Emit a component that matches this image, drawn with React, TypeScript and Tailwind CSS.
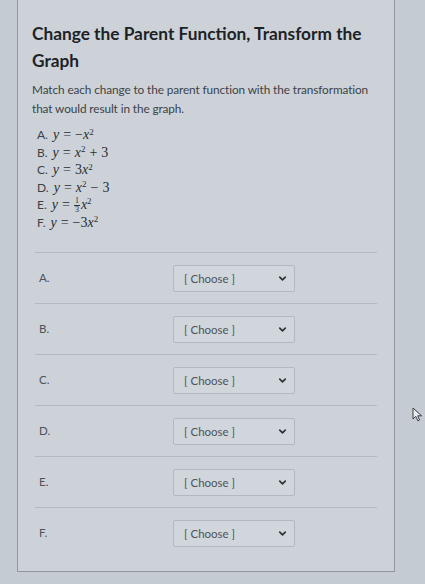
import { ChevronDown } from "lucide-react";

const Eq = () => <span className="mx-[4px]">=</span>;
const Sq = () => <sup className="text-[9px]">2</sup>;

const equations = [
  { letter: "A.", body: <><i>y</i><Eq />−<i>x</i><Sq /></> },
  { letter: "B.", body: <><i>y</i><Eq /><i>x</i><Sq /><span className="mx-[4px]">+</span>3</> },
  { letter: "C.", body: <><i>y</i><Eq />3<i>x</i><Sq /></> },
  { letter: "D.", body: <><i>y</i><Eq /><i>x</i><Sq /><span className="mx-[4px]">−</span>3</> },
  {
    letter: "E.",
    body: (
      <>
        <i>y</i>
        <Eq />
        <span className="inline-flex flex-col items-center align-middle text-[8px] leading-[8px] mr-[1px]">
          <span className="border-b border-[#333] px-[1px]">1</span>
          <span>3</span>
        </span>
        <i>x</i><Sq />
      </>
    ),
  },
  { letter: "F.", body: <><i>y</i><Eq />−3<i>x</i><Sq /></> },
];

const rows = ["A.", "B.", "C.", "D.", "E.", "F."];

function Select() {
  return (
    <div className="flex h-[27px] w-[122px] items-center justify-between rounded-[2px] border border-[#b3b9bf] bg-[#d0d6dc] pl-[10px] pr-[6px]">
      <span className="text-[11.5px] text-[#4d5358]">[ Choose ]</span>
      <ChevronDown size={11} strokeWidth={3.5} className="text-[#2d3135]" />
    </div>
  );
}

export default function App() {
  return (
    <div
      className="relative min-h-screen bg-[#c5cbd2] pb-[12px]"
      style={{ fontFamily: "Lato, 'Open Sans', sans-serif" }}
    >
      <div className="ml-[17px] w-[378px] min-h-[572px] border-x border-b border-[#8f969d] bg-[#ccd2d8] px-[14px] pt-[20px]">
        <h2 className="text-[17.3px] font-bold leading-[27px] text-[#1e2226]">
          Change the Parent Function, Transform the Graph
        </h2>

        <p className="mt-[6px] text-[11.8px] leading-[19px] tracking-[-0.1px] text-[#3d4247]">
          Match each change to the parent function with the transformation that would result in the graph.
        </p>

        <ul className="mt-[8px] pl-[5px] text-[12px] leading-[17.5px] text-[#3d4247]">
          {equations.map((eq) => (
            <li key={eq.letter} className="flex h-[17.5px] items-center gap-[5px]">
              <span>{eq.letter}</span>
              <span
                className="text-[14px] text-[#2a2e32]"
                style={{ fontFamily: "'Liberation Serif', 'DejaVu Serif', serif" }}
              >
                {eq.body}
              </span>
            </li>
          ))}
        </ul>

        <div className="mx-[3px] mt-[21px]">
          {rows.map((r) => (
            <div key={r} className="flex h-[51px] items-start border-t border-[#b4bac0] pt-[12px]">
              <span className="w-[138px] pl-[4px] pt-[4px] text-[11.5px] text-[#4d5358]">{r}</span>
              <Select />
            </div>
          ))}
        </div>
      </div>

      <svg
        className="absolute left-[412px] top-[407px]"
        width="11"
        height="15"
        viewBox="0 0 11 15"
      >
        <path
          d="M1 1 L1 12 L3.8 9.4 L5.8 13.8 L7.6 13 L5.7 8.8 L9.6 8.8 Z"
          fill="#e9ecef"
          stroke="#3a3f44"
          strokeWidth="1"
          strokeLinejoin="round"
        />
      </svg>
    </div>
  );
}
